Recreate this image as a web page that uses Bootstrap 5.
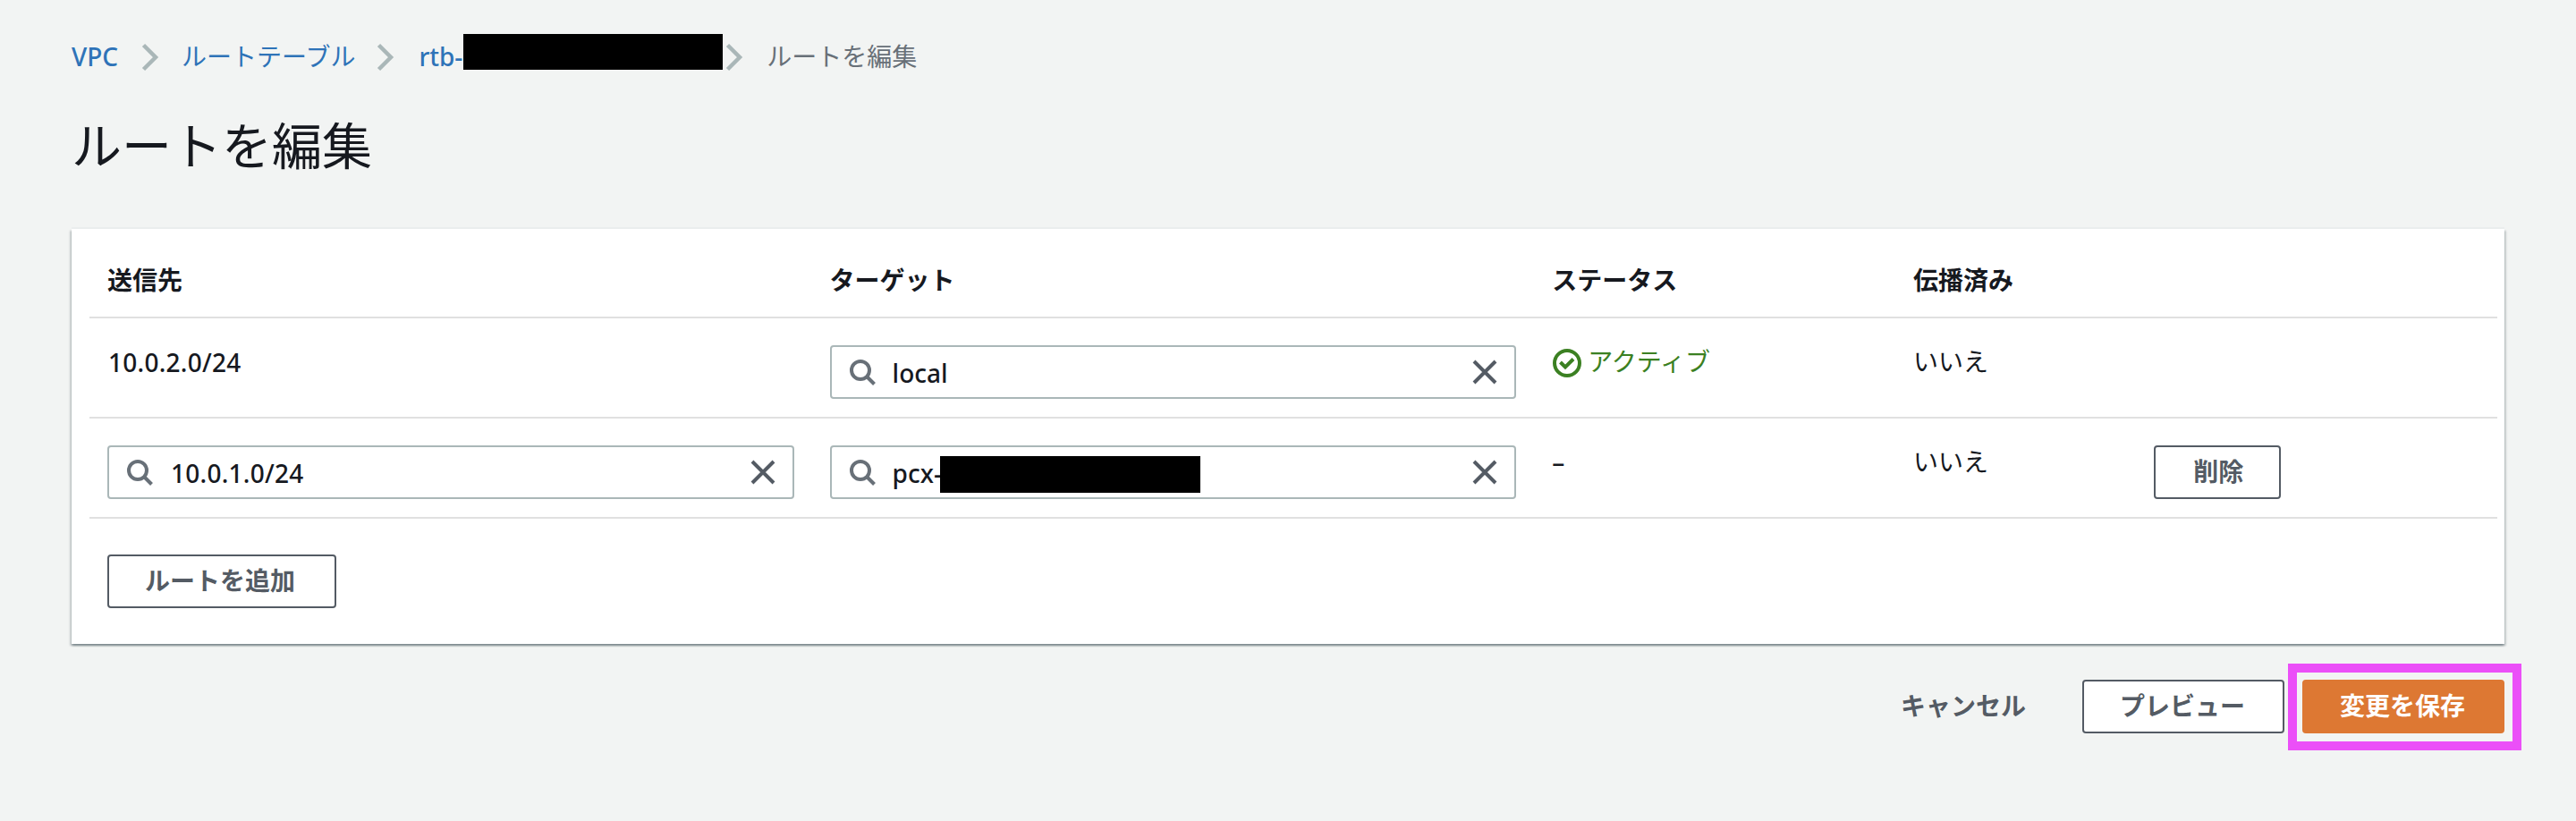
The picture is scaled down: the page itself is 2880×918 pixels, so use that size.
<!DOCTYPE html>
<html lang="ja">
<head>
<meta charset="utf-8">
<meta name="viewport" content="width=device-width, initial-scale=1">
<title>ルートを編集</title>
<link href="https://cdn.jsdelivr.net/npm/bootstrap@5.3.0/dist/css/bootstrap.min.css" rel="stylesheet">
<style>
body { background: #f2f4f3; color: #16191f; font-family: "Noto Sans", "Noto Sans CJK JP", sans-serif; font-size: 28px; line-height: 44px; }
.page { padding: 41px 80px 0; height: 918px; overflow: hidden; }
.latin { font-weight: 500; }
.addr { letter-spacing: .25px; }
.crumbs { height: 44px; white-space: nowrap; }
.crumbs a { color: #2e73b8; }
.crumbs .current { color: #687078; }
.crumbs .chev { width: 20px; height: 32px; flex: none; margin-top: 1px; }
.mask { background: #000; flex: none; }
.mask-rtb { width: 290px; height: 40px; margin: -10px 3px 0 1px; }
.mask-pcx { width: 291px; height: 41px; margin: 5px 0 0 -2px; }
h1 { font-size: 56px; font-weight: 400; line-height: 72px; margin: 41px 0 0; }
.panel { margin-top: 58px; height: 464px; padding: 0 8px 0 20px; background: #fff; box-shadow: 0 -2px 0 #eaeded, 0 2px 2px rgba(0,28,36,.3), 2px 2px 2px rgba(0,28,36,.15), -2px 2px 2px rgba(0,28,36,.15); }
.routes { table-layout: fixed; border-collapse: separate; border-spacing: 0; margin: 0; color: inherit; --bs-table-bg: transparent; }
.routes th, .routes td { border-bottom: 2px solid #e0e0e0; padding: 26px 20px 0; color: inherit; vertical-align: top; }
.routes td.latin { padding-top: 27px; }
.routes td.addr { padding-left: 21px; }
.routes thead tr { height: 100px; }
.routes tbody tr { height: 112px; }
.routes th { padding-top: 35px; }
.routes td.field { padding-top: 30px; }
.search { height: 60px; border: 2px solid #aab7b8; border-radius: 4px; padding: 0 19px 0 18px; }
.search .txt { margin: 2px 0 0 18px; }
.search .addr { margin-left: 19px; }
.search .lens { width: 32px; height: 32px; }
.search .clear { width: 28px; height: 28px; }
.ok { color: #3b8022; }
.ok svg { width: 32px; height: 32px; margin: 4px 7px 0 1px; }
.btn-line, .btn-plain, .btn-save { height: 60px; font-size: 28px; font-weight: 700; line-height: 44px; padding: 5px 41px 7px 39px; border-width: 2px; border-radius: 4px; }
.btn-line { background: #fff; color: #545b64; border-color: #545b64; }
.btn-plain { color: #545b64; background: none; border-color: transparent; }
.btn-save { width: 226px; background: #dd7833; border-color: #dd7833; color: #fff; }
.del { width: 142px; padding-left: 40px; padding-right: 38px; }
.add { margin: 40px 0 0 20px; width: 256px; padding-left: 37px; }
.actions { margin-top: 40px; }
.halo { left: -16px; top: -18px; width: 261px; height: 97px; border: 10px solid #eb4ff8; pointer-events: none; }
</style>
</head>
<body>
<svg width="0" height="0" class="position-absolute" aria-hidden="true">
  <symbol id="chev" viewBox="0 0 20 32"><path d="M2.500 2.500L16 16L2.500 29.500" fill="none" stroke="#aab7b8" stroke-width="4.500"/></symbol>
  <symbol id="lens" viewBox="0 0 32 32"><g fill="none" stroke="#687078" stroke-width="4"><circle cx="14" cy="14" r="10"/><path d="M21 21L29.500 29.500"/></g></symbol>
  <symbol id="clear" viewBox="0 0 28 28"><path d="M2 2L26 26M26 2L2 26" fill="none" stroke="#545b64" stroke-width="4"/></symbol>
  <symbol id="ok" viewBox="0 0 32 32"><g fill="none" stroke="#3b8022" stroke-width="4"><circle cx="16" cy="16" r="14"/><path d="M8.500 15L14 20.500L23 11.500"/></g></symbol>
</svg>
<main class="page">
  <nav class="crumbs d-flex align-items-center" aria-label="breadcrumb">
    <a href="#" class="text-decoration-none latin">VPC</a>
    <svg class="chev" style="margin-left:26px;margin-right:25px"><use href="#chev"/></svg>
    <a href="#" class="text-decoration-none">ルートテーブル</a>
    <svg class="chev" style="margin-left:24px;margin-right:27px"><use href="#chev"/></svg>
    <a href="#" class="text-decoration-none latin">rtb-</a><span class="mask mask-rtb"></span>
    <svg class="chev" style="margin-right:26px"><use href="#chev"/></svg>
    <span class="current">ルートを編集</span>
  </nav>
  <h1>ルートを編集</h1>
  <section class="panel">
    <table class="table routes">
      <colgroup><col style="width:30%"><col style="width:30%"><col style="width:15%"><col style="width:10%"><col style="width:15%"></colgroup>
      <thead><tr><th>送信先</th><th>ターゲット</th><th>ステータス</th><th>伝播済み</th><th></th></tr></thead>
      <tbody>
        <tr>
          <td class="latin addr">10.0.2.0/24</td>
          <td class="field"><div class="search d-flex align-items-center"><svg class="lens"><use href="#lens"/></svg><span class="txt latin">local</span><svg class="clear ms-auto"><use href="#clear"/></svg></div></td>
          <td><span class="ok d-flex align-items-center text-nowrap"><svg><use href="#ok"/></svg>アクティブ</span></td>
          <td class="text-nowrap">いいえ</td><td></td>
        </tr>
        <tr>
          <td class="field"><div class="search d-flex align-items-center"><svg class="lens"><use href="#lens"/></svg><span class="txt latin addr">10.0.1.0/24</span><svg class="clear ms-auto"><use href="#clear"/></svg></div></td>
          <td class="field"><div class="search d-flex align-items-center"><svg class="lens"><use href="#lens"/></svg><span class="txt latin">pcx-</span><span class="mask mask-pcx"></span><svg class="clear ms-auto"><use href="#clear"/></svg></div></td>
          <td class="latin">–</td>
          <td class="text-nowrap">いいえ</td>
          <td class="field"><button class="btn btn-line del d-block">削除</button></td>
        </tr>
      </tbody>
    </table>
    <button class="btn btn-line add d-block">ルートを追加</button>
  </section>
  <div class="actions d-flex justify-content-end">
    <button class="btn btn-plain me-3">キャンセル</button>
    <button class="btn btn-line text-nowrap" style="width:226px;margin:0 20px 0 4px">プレビュー</button>
    <div class="position-relative"><button class="btn btn-save text-nowrap">変更を保存</button><span class="halo position-absolute"></span></div>
  </div>
</main>
<script src="https://cdn.jsdelivr.net/npm/bootstrap@5.3.0/dist/js/bootstrap.bundle.min.js"></script>
</body>
</html>
